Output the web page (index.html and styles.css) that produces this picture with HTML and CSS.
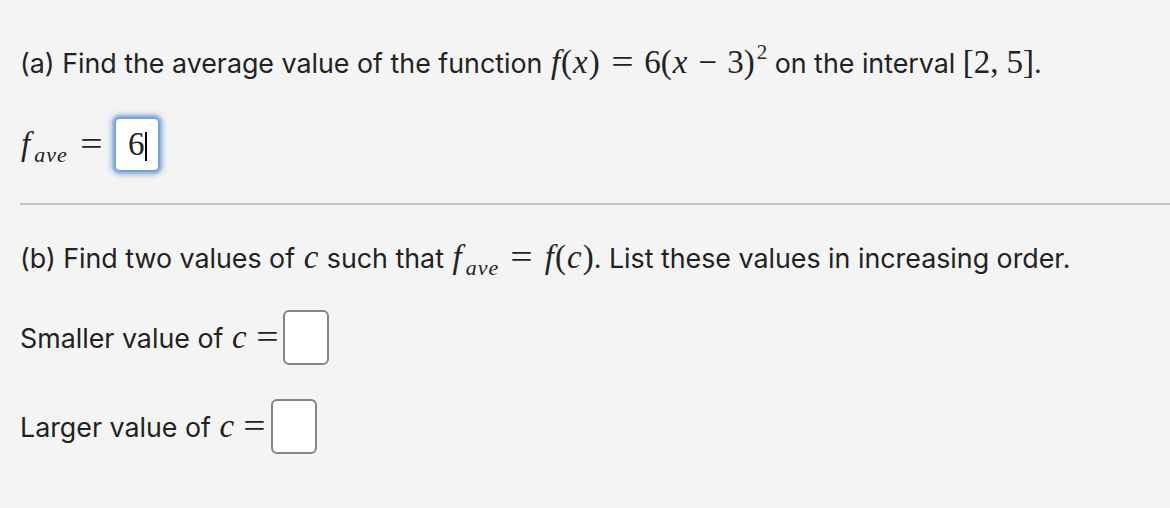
FILE: index.html
```html
<!DOCTYPE html>
<html lang="en">
<head>
    <meta charset="UTF-8">
    <title>Average value</title>
    <link rel="stylesheet" href="styles.css">
</head>
<body>
    <div class="question">
        <p class="prompt">
            (a) Find the average value of the function
            <span class="math"><i>f</i>(<i>x</i>)<span class="rel">=</span>6(<i>x</i><span class="bin">&minus;</span>3)<sup>2</sup></span>
            on the interval <span class="math">[2,<span class="thin"></span>5]</span>.
        </p>

        <div class="answer-row first">
            <span class="math"><i>f</i><sub><i>ave</i></sub><span class="rel">=</span></span>
            <div class="answer-box focused">6<span class="caret"></span></div>
        </div>

        <hr class="divider">

        <p class="prompt">
            (b) Find two values of <span class="math"><i>c</i></span> such that
            <span class="math"><i>f</i><sub><i>ave</i></sub><span class="rel">=</span><i>f</i>(<i>c</i>)</span>. List these values in increasing order.
        </p>

        <div class="answer-row small">
            <span class="label">Smaller value of <span class="math"><i>c</i><span class="rel">=</span></span></span>
            <div class="answer-box"></div>
        </div>

        <div class="answer-row large">
            <span class="label">Larger value of <span class="math"><i>c</i><span class="rel">=</span></span></span>
            <div class="answer-box"></div>
        </div>
    </div>
</body>
</html>
```

FILE: styles.css
```css
* {
    box-sizing: border-box;
    margin: 0;
    padding: 0;
}

body {
    font-family: Inter, 'Noto Sans', sans-serif;
    font-size: 26.8px;
    color: #222;
    background: #f4f4f4;
}

.question {
    padding: 46px 0 0 20px;
}

.prompt {
    line-height: 32px;
    white-space: nowrap;
}

.math {
    font-family: 'Liberation Serif', 'DejaVu Serif', serif;
    font-size: 33px;
    color: #222;
}

.math i {
    font-style: italic;
    padding: 0 1px;
}

.math sub i {
    padding: 0;
    letter-spacing: 1px;
}

.math sup {
    font-size: 21px;
    vertical-align: 14px;
    line-height: 0;
    margin-left: 2px;
}

.math sub {
    font-size: 22px;
    vertical-align: -7px;
    line-height: 0;
    margin-left: 3px;
}

.rel {
    display: inline-block;
    margin: 0 13px;
    transform: scaleX(1.2);
}

.bin {
    margin: 0 10px;
}

.thin {
    display: inline-block;
    width: 8px;
}

.answer-row {
    display: flex;
    align-items: center;
}

.answer-row.first {
    margin-top: 38px;
}

.answer-row.first .rel {
    margin: 0 14px;
}

.answer-row.small {
    margin-top: 36px;
}

.answer-row.large {
    margin-top: 34px;
}

.answer-row .label .rel {
    margin: 0 7px 0 10px;
}

.answer-box {
    width: 46px;
    height: 55px;
    background: #fff;
    border: 2px solid #858585;
    border-radius: 6px;
    display: flex;
    align-items: center;
    justify-content: center;
    font-family: 'Liberation Serif', 'DejaVu Serif', serif;
    font-size: 33px;
    color: #222;
}

.answer-box.focused {
    border: 2px solid #7aa3d4;
    box-shadow: 0 0 0 2px #9fbde0, 0 0 5px 3px rgba(95, 145, 210, 0.55);
}

.caret {
    display: inline-block;
    width: 2px;
    height: 29px;
    background: #000;
    margin-top: 4px;
}

.divider {
    border: none;
    border-top: 2px solid #c2c2c2;
    margin: 31px 0 36px;
}
```
